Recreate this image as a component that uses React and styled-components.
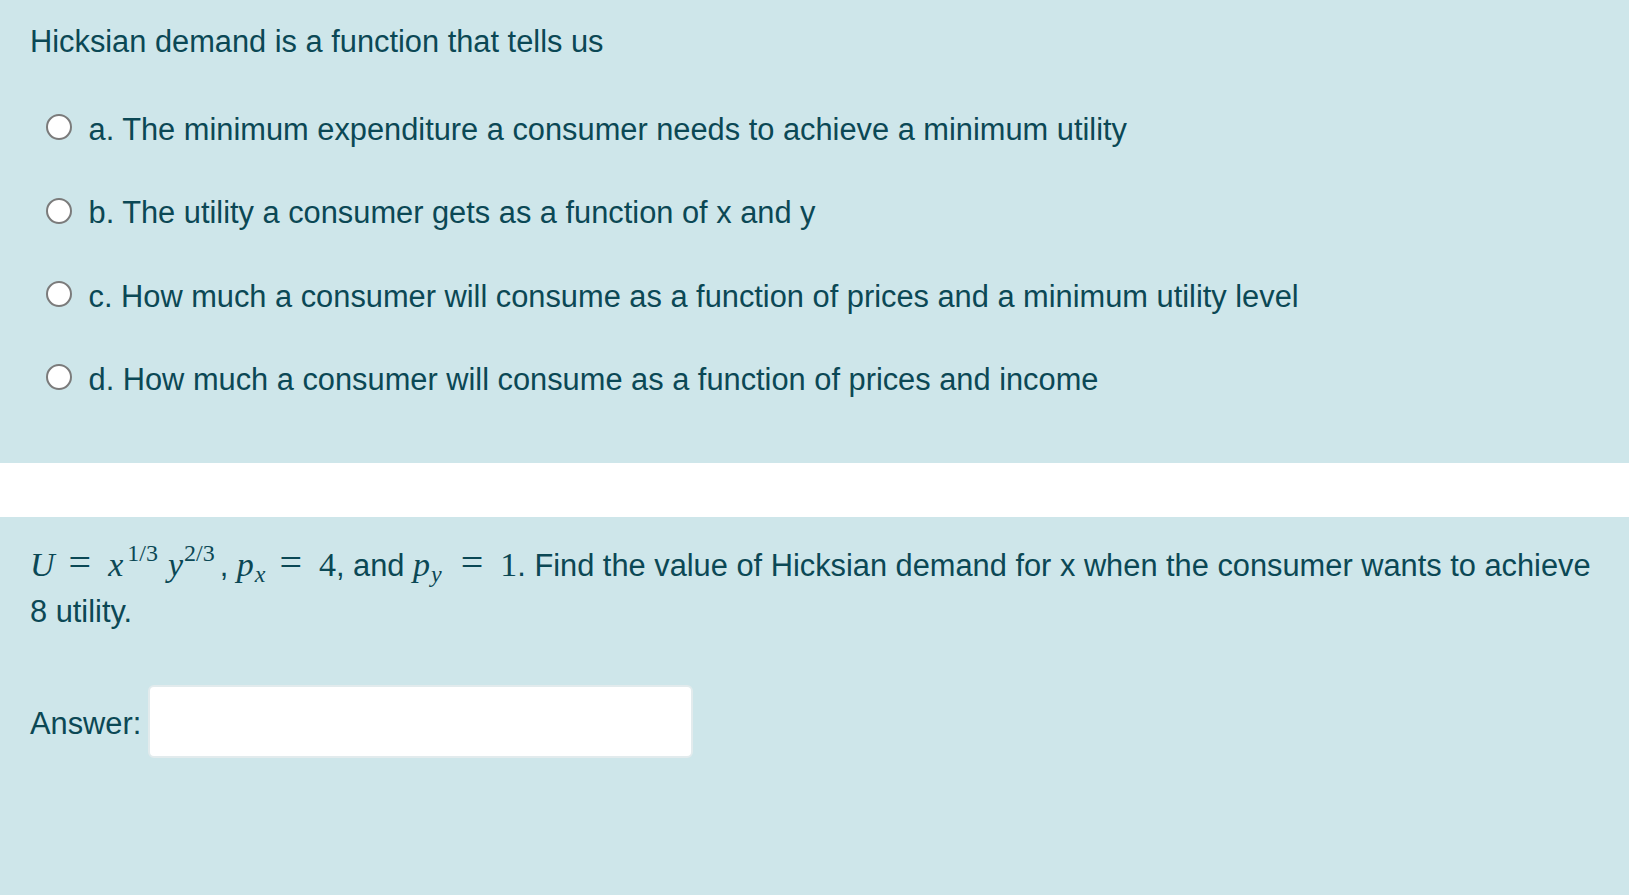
import React from "react";
import styled, { createGlobalStyle } from "styled-components";

const GlobalStyle = createGlobalStyle`
  html, body {
    margin: 0;
    padding: 0;
    background: #ffffff;
  }
  body {
    font-family: "Liberation Sans", Arial, sans-serif;
    font-size: 30.8px;
    line-height: 46.2px;
    color: #0b4855;
  }
`;

const Page = styled.main`
  display: flex;
  flex-direction: column;
`;

const Panel = styled.section`
  background: #cee6ea;
  padding: ${(p) => p.$pad};
  margin-top: ${(p) => p.$mt || 0}px;
`;

const Prompt = styled.div`
  margin: 0;
`;

const Options = styled.div`
  display: flex;
  flex-direction: column;
  margin-top: 23px;
  padding-left: 16px;
`;

const OptionRow = styled.label`
  display: flex;
  align-items: flex-start;
  gap: 16.5px;
  padding: 18.55px 0;
  cursor: pointer;
`;

const Radio = styled.input.attrs({ type: "radio" })`
  appearance: none;
  -webkit-appearance: none;
  flex: none;
  width: 26px;
  height: 26px;
  margin: 7.5px 0 0;
  border: 2px solid #7b7b7b;
  border-radius: 50%;
  background: #ffffff;
  box-sizing: border-box;
`;

const Text = styled.p`
  margin: 0;
`;

const MathRun = styled.span`
  font-family: "Liberation Serif", "Times New Roman", serif;
  font-size: 34px;
  line-height: 1;
  white-space: nowrap;
`;

const Var = styled.i`
  font-style: italic;
  margin-left: ${(p) => p.$ml || 0}px;
`;

const Num = styled.span`
  font-style: normal;
`;

const Rel = styled.span`
  font-size: 40px;
  margin: 0 17px 0 14px;
`;

const Sup = styled.span`
  font-size: 24px;
  position: relative;
  top: -15px;
  margin-left: ${(p) => p.$ml || 0}px;
  margin-right: ${(p) => p.$mr || 0}px;
`;

const Sub = styled.i`
  font-size: 24px;
  font-style: italic;
  position: relative;
  top: 6px;
  margin-left: 1px;
  margin-right: ${(p) => p.$mr || 0}px;
`;

const AnswerRow = styled.div`
  display: flex;
  align-items: center;
  gap: 7px;
  margin-top: 50px;
`;

const AnswerLabel = styled.label`
  padding-top: 5px;
`;

const AnswerInput = styled.input.attrs({ type: "text" })`
  width: 545px;
  height: 73px;
  box-sizing: border-box;
  border: 2px solid #e2ebed;
  border-radius: 6px;
  background: #ffffff;
  font: inherit;
  color: inherit;
  padding: 0 12px;
  outline: none;
`;

const options = [
  "a. The minimum expenditure a consumer needs to achieve a minimum utility",
  "b. The utility a consumer gets as a function of x and y",
  "c. How much a consumer will consume as a function of prices and a minimum utility level",
  "d. How much a consumer will consume as a function of prices and income",
];

export default function App() {
  return (
    <>
      <GlobalStyle />
      <Page>
        <Panel $pad="19.2px 30px 41px">
          <Prompt>Hicksian demand is a function that tells us</Prompt>
          <Options>
            {options.map((o, i) => (
              <OptionRow key={i}>
                <Radio name="q1" />
                <span>{o}</span>
              </OptionRow>
            ))}
          </Options>
        </Panel>
        <Panel $pad="26px 30px 200px" $mt={54}>
          <Text>
            <MathRun>
              <Var>U</Var>
              <Rel>=</Rel>
              <Var>x</Var>
              <Sup $ml={4}>1/3</Sup>
              <Var $ml={10}>y</Var>
              <Sup $ml={1} $mr={5}>2/3</Sup>
            </MathRun>
            ,{" "}
            <MathRun>
              <Var>p</Var>
              <Sub>x</Sub>
              <Rel>=</Rel>
              <Num>4</Num>
            </MathRun>
            , and{" "}
            <MathRun>
              <Var>p</Var>
              <Sub $mr={5}>y</Sub>
              <Rel>=</Rel>
              <Num>1</Num>
            </MathRun>
            . Find the value of Hicksian demand for x when the consumer wants to achieve 8 utility.
          </Text>
          <AnswerRow>
            <AnswerLabel htmlFor="answer">Answer:</AnswerLabel>
            <AnswerInput id="answer" />
          </AnswerRow>
        </Panel>
      </Page>
    </>
  );
}
